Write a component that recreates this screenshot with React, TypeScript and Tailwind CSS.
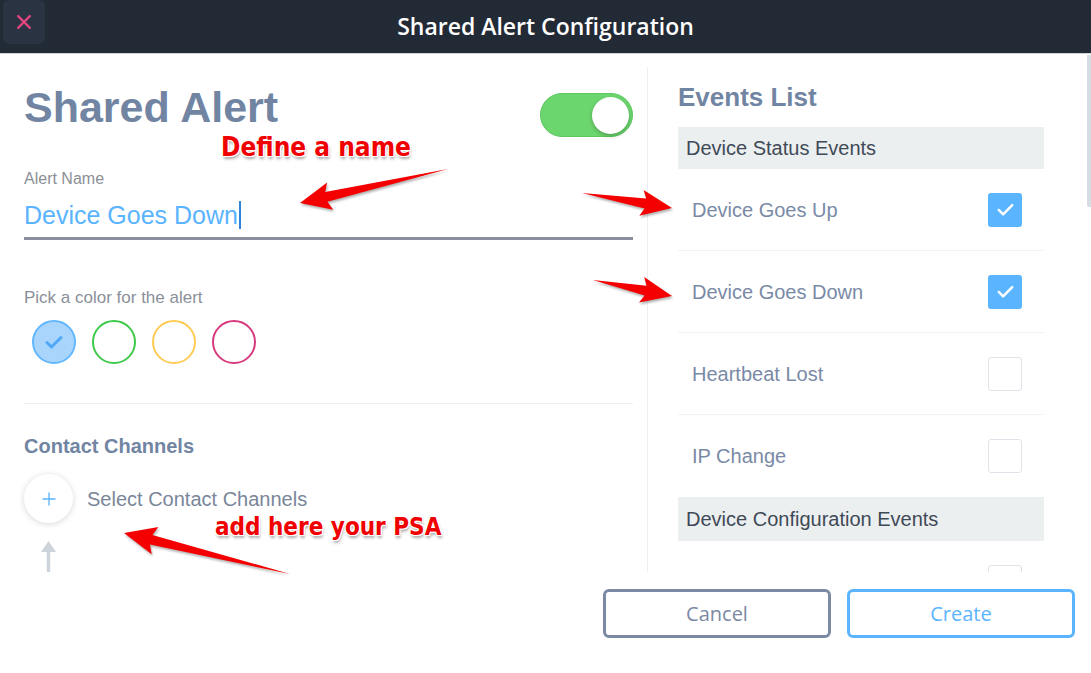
import React from 'react';

type Pt = [number, number];

/** Builds the polygon of a tapered annotation arrow from tail to tip. */
function arrowPoints(tail: Pt, tip: Pt, headLen = 26, headHalf = 13, shaftHalf = 5): string {
  const dx = tip[0] - tail[0];
  const dy = tip[1] - tail[1];
  const len = Math.hypot(dx, dy);
  const ux = dx / len;
  const uy = dy / len;
  const nx = -uy;
  const ny = ux;
  const bx = tip[0] - ux * headLen;
  const by = tip[1] - uy * headLen;
  const pts: Pt[] = [
    tail,
    [bx + nx * shaftHalf, by + ny * shaftHalf],
    [bx + nx * headHalf - ux * 4, by + ny * headHalf - uy * 4],
    tip,
    [bx - nx * headHalf - ux * 4, by - ny * headHalf - uy * 4],
    [bx - nx * shaftHalf, by - ny * shaftHalf],
  ];
  return pts.map((p) => `${p[0].toFixed(1)},${p[1].toFixed(1)}`).join(' ');
}

const events = [
  { label: 'Device Goes Up', checked: true },
  { label: 'Device Goes Down', checked: true },
  { label: 'Heartbeat Lost', checked: false },
  { label: 'IP Change', checked: false },
];

const Checkbox = ({ checked }: { checked: boolean }) =>
  checked ? (
    <div className="w-[34px] h-[34px] rounded-[3px] bg-[#5ab4ff] flex items-center justify-center">
      <svg viewBox="0 0 24 24" className="w-[23px] h-[23px]" fill="none" stroke="#fff" strokeWidth="2.6" strokeLinecap="round" strokeLinejoin="round">
        <path d="M5 12.5l4.5 4.5L19 7.5" />
      </svg>
    </div>
  ) : (
    <div className="w-[34px] h-[34px] rounded-[3px] bg-white border-[1.5px] border-[#dfe4ea]" />
  );

export default function App() {
  const colors = ['#3ec94a', '#ffcb55', '#d63a7c'];
  const note =
    "absolute leading-[36px] font-bold text-[#f00000] font-['DejaVu_Sans_Condensed','DejaVu_Sans',sans-serif] [text-shadow:1px_1px_0_#fff,-1px_-1px_0_#fff,1px_-1px_0_#fff,-1px_1px_0_#fff,1px_3px_3px_rgba(0,0,0,0.35)]";

  return (
    <div className="relative w-[1091px] h-[673px] bg-white overflow-hidden font-['Liberation_Sans',Arial,sans-serif]">
      {/* ── Header ── */}
      <div className="relative h-[54px] bg-[#222a36] flex items-center justify-center border-b border-[#d0d4da]">
        <button className="absolute left-[3px] top-0 w-[42px] h-[44px] rounded-[6px] bg-[#2a3341] flex items-center justify-center">
          <svg viewBox="0 0 24 24" className="w-[20px] h-[20px]" fill="none" stroke="#e0467e" strokeWidth="2.8" strokeLinecap="round">
            <path d="M5 5l14 14M19 5L5 19" />
          </svg>
        </button>
        <h1 className="text-white text-[23px] font-semibold font-['Open_Sans',sans-serif]">
          Shared Alert Configuration
        </h1>
      </div>

      {/* ── Body ── */}
      <div className="flex h-[518px] overflow-hidden">
        {/* Left column: alert settings */}
        <div className="ml-[24px] w-[609px] shrink-0 pt-[30px] flex flex-col">
          <div className="h-[46px] shrink-0 flex justify-between items-start">
            <h2 className="text-[43px] leading-[46px] font-bold text-[#7185a3]">Shared Alert</h2>
            <div className="mt-[9px] w-[93px] h-[44px] rounded-full bg-[#6cd66e] border border-[#5cc85f] flex items-center justify-end pr-[3px]">
              <div className="w-[37px] h-[37px] rounded-full bg-white shadow-[0_2px_4px_rgba(0,0,0,0.25)]" />
            </div>
          </div>

          <label className="mt-[39px] text-[16px] leading-[20px] text-[#8b8f96]">Alert Name</label>
          <div className="mt-[10px] pb-[6px] border-b-[3px] border-[#8a8f9d] flex items-center shrink-0">
            <span className="text-[25px] leading-[32px] text-[#5ab4ff]">Device Goes Down</span>
            <span className="w-[2px] h-[28px] bg-[#2e84d6] ml-[1px]" />
          </div>

          <p className="mt-[48px] text-[17px] leading-[20px] text-[#8b909a]">Pick a color for the alert</p>
          <div className="mt-[12px] pl-[8px] flex gap-[16px] shrink-0">
            <div className="w-[44px] h-[44px] rounded-full bg-[#a9d5fd] border-2 border-[#62b7ff] flex items-center justify-center">
              <svg viewBox="0 0 24 24" className="w-[24px] h-[24px]" fill="none" stroke="#4ea8f7" strokeWidth="3" strokeLinecap="round" strokeLinejoin="round">
                <path d="M5 12.5l4.5 4.5L19 7.5" />
              </svg>
            </div>
            {colors.map((c) => (
              <div key={c} className="w-[44px] h-[44px] rounded-full border-2" style={{ borderColor: c }} />
            ))}
          </div>

          <div className="mt-[39px] h-px shrink-0 bg-[#eeeff1]" />

          <h3 className="mt-[30px] text-[20px] leading-[24px] font-bold text-[#7185a3]">Contact Channels</h3>
          <div className="mt-[16px] flex items-center gap-[14px] shrink-0">
            <div className="w-[49px] h-[49px] rounded-full bg-white shadow-[0_1px_6px_rgba(0,0,0,0.16)] flex items-center justify-center">
              <svg viewBox="0 0 24 24" className="w-[18px] h-[18px]" fill="none" stroke="#5ab4ff" strokeWidth="1.8" strokeLinecap="round">
                <path d="M12 4v16M4 12h16" />
              </svg>
            </div>
            <span className="text-[20px] text-[#7a8699]">Select Contact Channels</span>
          </div>
          <div className="mt-[18px] ml-[16px] w-[17px] shrink-0">
            <svg viewBox="0 0 17 34" className="w-[17px] h-[34px]" fill="#cdd3db">
              <path d="M8.5 0L16 11H10.2V34H6.8V11H1z" />
            </svg>
          </div>
        </div>

        {/* Divider */}
        <div className="ml-[14px] mt-[13px] w-px shrink-0 bg-[#eceef1]" />

        {/* Right column: events */}
        <div className="ml-[30px] w-[366px] shrink-0 pt-[27px] flex flex-col">
          <h2 className="text-[26px] leading-[32px] font-bold text-[#7185a3]">Events List</h2>
          <div className="mt-[14px] h-[42px] shrink-0 bg-[#eceff0] pl-[8px] flex items-center text-[20px] text-[#3f4a57]">
            Device Status Events
          </div>
          {events.map((e, i) => (
            <div
              key={e.label}
              className={`h-[82px] shrink-0 pl-[14px] pr-[22px] flex items-center justify-between ${
                i < events.length - 1 ? 'border-b border-[#f0f2f4]' : ''
              }`}
            >
              <span className="text-[20px] text-[#7a8aa6]">{e.label}</span>
              <Checkbox checked={e.checked} />
            </div>
          ))}
          <div className="h-[44px] shrink-0 bg-[#eceff0] pl-[8px] flex items-center text-[20px] text-[#3f4a57]">
            Device Configuration Events
          </div>
          <div className="h-[82px] shrink-0 pl-[14px] pr-[22px] flex items-center justify-end">
            <Checkbox checked={false} />
          </div>
        </div>
      </div>

      {/* ── Footer ── */}
      <div className="pt-[17px] pr-[16px] flex justify-end gap-[16px] font-['Open_Sans',sans-serif]">
        <button className="w-[228px] h-[49px] rounded-[6px] border-[3px] border-[#7b8aa3] text-[20px] text-[#7b8aa3]">
          Cancel
        </button>
        <button className="w-[228px] h-[49px] rounded-[6px] border-[3px] border-[#5ab4ff] text-[20px] text-[#5ab4ff]">
          Create
        </button>
      </div>

      {/* Scrollbar thumb */}
      <div className="absolute right-0 top-[55px] w-[4px] h-[152px] rounded-bl-[2px] bg-[#d5dce4]" />

      {/* ── Annotations ── */}
      <svg className="absolute inset-0 pointer-events-none drop-shadow-[1px_2px_1px_rgba(0,0,0,0.3)]" width="1091" height="673">
        <polygon fill="#f50000" points={arrowPoints([448, 169], [300, 203], 27, 14, 5)} />
        <polygon fill="#f50000" points={arrowPoints([582, 193], [672, 208], 27, 13, 5)} />
        <polygon fill="#f50000" points={arrowPoints([593, 280], [672, 296], 27, 13, 5)} />
        <polygon fill="#f50000" points={arrowPoints([290, 574], [124, 533], 28, 14, 5)} />
      </svg>
      <div className={`${note} text-[26px] left-[221px] top-[129px]`}>Define a name</div>
      <div className={`${note} text-[24px] left-[215px] top-[509px]`}>add here your PSA</div>
    </div>
  );
}
